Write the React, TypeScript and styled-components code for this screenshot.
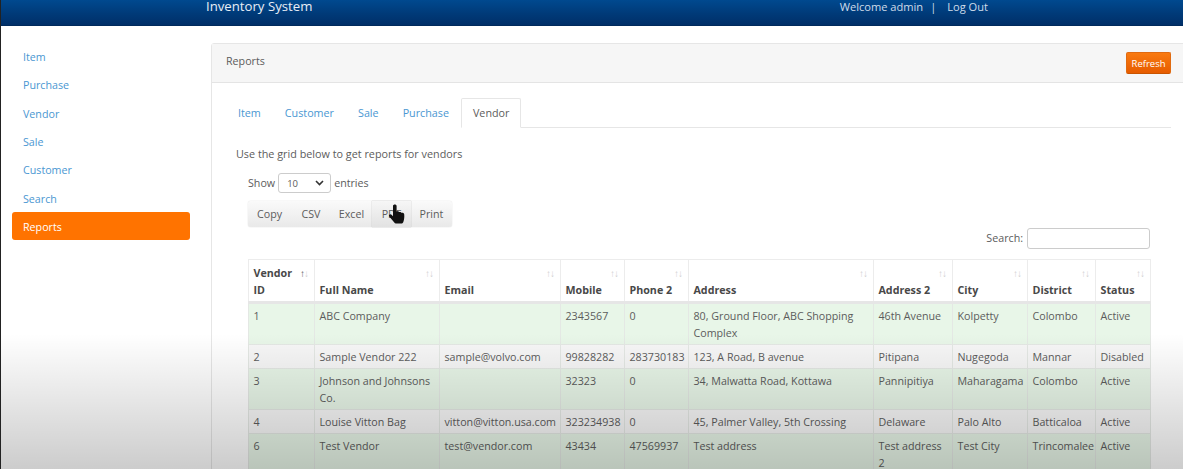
import React from 'react';
import styled, { createGlobalStyle } from 'styled-components';

const GlobalStyle = createGlobalStyle`
  html, body {
    margin: 0;
    height: 469px;
    overflow: hidden;
    background: #fff;
    font-family: 'Open Sans', 'Liberation Sans', sans-serif;
    font-size: 10.7px;
    color: #5c5c5c;
  }
`;

const navItems = ['Item', 'Purchase', 'Vendor', 'Sale', 'Customer', 'Search', 'Reports'];
const tabs = ['Item', 'Customer', 'Sale', 'Purchase', 'Vendor'];
const gridButtons = [
  { label: 'Copy', width: 43 },
  { label: 'CSV', width: 40 },
  { label: 'Excel', width: 41 },
  { label: 'PDF', width: 39 },
  { label: 'Print', width: 41 },
];

const columns = [
  { label: 'Vendor ID', width: 66 },
  { label: 'Full Name', width: 125 },
  { label: 'Email', width: 121 },
  { label: 'Mobile', width: 64 },
  { label: 'Phone 2', width: 64 },
  { label: 'Address', width: 185 },
  { label: 'Address 2', width: 79 },
  { label: 'City', width: 75 },
  { label: 'District', width: 68 },
  { label: 'Status', width: 55 },
];

const rows = [
  ['1', 'ABC Company', '', '2343567', '0', '80, Ground Floor, ABC Shopping Complex', '46th Avenue', 'Kolpetty', 'Colombo', 'Active'],
  ['2', 'Sample Vendor 222', 'sample@volvo.com', '99828282', '283730183', '123, A Road, B avenue', 'Pitipana', 'Nugegoda', 'Mannar', 'Disabled'],
  ['3', 'Johnson and Johnsons Co.', '', '32323', '0', '34, Malwatta Road, Kottawa', 'Pannipitiya', 'Maharagama', 'Colombo', 'Active'],
  ['4', 'Louise Vitton Bag', 'vitton@vitton.usa.com', '323234938', '0', '45, Palmer Valley, 5th Crossing', 'Delaware', 'Palo Alto', 'Batticaloa', 'Active'],
  ['6', 'Test Vendor', 'test@vendor.com', '43434', '47569937', 'Test address', 'Test address 2', 'Test City', 'Trincomalee', 'Active'],
];

const Page = styled.div`
  position: relative;
  height: 469px;
  overflow: hidden;
  border-left: 1px solid #222;
`;

const TopBar = styled.header`
  height: 26px;
  box-sizing: border-box;
  border-bottom: 1px solid #002a5c;
  background: linear-gradient(#00498f, #003a78 55%, #002f68);
  display: flex;
  justify-content: space-between;
  color: #dfe8f2;
  padding: 0 195px 0 205px;
  line-height: 13px;
`;

const Brand = styled.span`
  font-size: 13.2px;
  color: #e8eef6;
`;

const UserLinks = styled.span`
  display: flex;
  font-size: 11.1px;
  color: #cfdcea;
`;

const Separator = styled.span`
  margin: 0 11px 0 7px;
`;

const Main = styled.div`
  display: flex;
  align-items: flex-start;
  padding: 17px 0 0 11px;
`;

const Sidebar = styled.nav`
  width: 178px;
  flex: none;
  margin: -1px 21px 0 0;
  display: flex;
  flex-direction: column;
`;

const NavItem = styled.a<{ $active?: boolean }>`
  height: 28.3px;
  box-sizing: border-box;
  display: flex;
  align-items: center;
  padding: 2px 0 0 11px;
  border-radius: 3px;
  color: ${(p) => (p.$active ? '#fff' : '#4a97d2')};
  background: ${(p) => (p.$active ? '#ff7300' : 'transparent')};
`;

const Panel = styled.section`
  flex: 1;
  min-width: 0;
  height: 500px;
  margin-right: -4px;
  border: 1px solid #e6e6e6;
  border-radius: 3px 0 0 0;
`;

const PanelHeading = styled.div`
  height: 39px;
  box-sizing: border-box;
  background: #f6f6f6;
  border-bottom: 1px solid #e4e4e4;
  display: flex;
  align-items: center;
  justify-content: space-between;
  padding: 0 15px 0 14px;
`;

const PanelTitle = styled.span`
  padding-bottom: 4px;
`;

const RefreshButton = styled.button`
  width: 45px;
  height: 22px;
  padding: 0;
  border: 1px solid #e06a10;
  border-bottom-color: #c95400;
  border-radius: 2px;
  background: linear-gradient(#f97a10, #e65c00);
  color: #fff;
  font: 9.5px 'Open Sans', 'Liberation Sans', sans-serif;
`;

const PanelBody = styled.div`
  padding: 15px 11px 0 14px;
  margin-right: 4px;
`;

const TabBar = styled.div`
  display: flex;
  height: 30px;
  box-sizing: border-box;
  border-bottom: 1px solid #e6e6e6;
`;

const Tab = styled.a<{ $active?: boolean }>`
  height: 30px;
  box-sizing: border-box;
  padding: 0 11px;
  display: flex;
  align-items: center;
  font-size: 10.75px;
  color: ${(p) => (p.$active ? '#5c5c5c' : '#4a97d2')};
  background: #fff;
  border: 1px solid ${(p) => (p.$active ? '#e6e6e6' : 'transparent')};
  border-bottom-color: ${(p) => (p.$active ? '#fff' : 'transparent')};
  border-radius: 2px 2px 0 0;
`;

const Intro = styled.p`
  margin: 18px 0 0 10px;
  font-size: 10.8px;
  line-height: 15px;
`;

const Grid = styled.div`
  position: relative;
  width: 902px;
  margin: 11px 0 0 22px;
`;

const LengthRow = styled.div`
  display: flex;
  align-items: center;
  gap: 3px;
  height: 22px;
`;

const FakeSelect = styled.span`
  width: 53px;
  height: 20px;
  box-sizing: border-box;
  border: 1px solid #ccc;
  border-radius: 3px;
  padding: 0 6px 0 8px;
  display: flex;
  align-items: center;
  justify-content: space-between;
  font-size: 9.5px;
  background: #fff;
`;

const ButtonGroup = styled.div`
  position: relative;
  display: inline-flex;
  margin-top: 7px;
  height: 26px;
  border-radius: 3px;
  box-shadow: 0 0 1px #bbb;
  background: linear-gradient(#fafafa, #e9e9e9);
  vertical-align: top;
`;

const GridButton = styled.span<{ $w: number; $pressed?: boolean }>`
  display: flex;
  align-items: center;
  justify-content: center;
  width: ${(p) => p.$w}px;
  ${(p) =>
    p.$pressed &&
    `
    background: linear-gradient(#f6f6f6, #e2e2e2);
    box-shadow: 0 0 1px #aaa;
  `}
`;

const Cursor = styled.svg`
  position: absolute;
  left: 140px;
  top: 3px;
  width: 18px;
  height: 21px;
`;

const SearchRow = styled.div`
  display: flex;
  justify-content: flex-end;
  align-items: center;
  gap: 4px;
  height: 22px;
`;

const SearchBox = styled.span`
  width: 123px;
  height: 21px;
  box-sizing: border-box;
  border: 1px solid #ccc;
  border-radius: 3px;
  background: #fff;
`;

const Table = styled.table`
  margin-top: 10px;
  width: 902px;
  table-layout: fixed;
  border-collapse: collapse;
  border: 1px solid #e8e8e8;
`;

const Col = styled.col<{ $w: number }>`
  width: ${(p) => p.$w}px;
`;

const HeadCell = styled.th`
  position: relative;
  height: 43px;
  box-sizing: border-box;
  padding: 0 18px 2px 4.5px;
  vertical-align: bottom;
  text-align: left;
  font-weight: 700;
  line-height: 17px;
  color: #484848;
  border: 1px solid #ececec;
  border-bottom: 3px solid #e6e6e6;
  white-space: normal;
`;

const HeadLabel = styled.span`
  white-space: nowrap;
`;

const SortMark = styled.span`
  position: absolute;
  right: 6px;
  top: 5px;
  font-size: 10px;
  letter-spacing: -1px;
  font-weight: 400;
  color: #cfcfcf;
`;

const ActiveArrow = styled.span`
  color: #555;
`;

const BodyRow = styled.tr<{ $odd: boolean }>`
  background: ${(p) => (p.$odd ? '#e8f6e8' : '#f7f7f7')};
`;

const BodyCell = styled.td`
  padding: 4px 4.5px 2px;
  vertical-align: top;
  line-height: 17px;
  border: 1px solid #e4e8e4;
  white-space: normal;
`;

const Shade = styled.div`
  position: absolute;
  left: 0;
  right: 0;
  bottom: 0;
  height: 135px;
  pointer-events: none;
  background: linear-gradient(rgba(0, 0, 0, 0), rgba(0, 0, 0, 0.2));
`;

export default function App() {
  return (
    <>
      <GlobalStyle />
      <Page>
        <TopBar>
          <Brand>Inventory System</Brand>
          <UserLinks>
            <span>Welcome admin</span>
            <Separator>|</Separator>
            <span>Log Out</span>
          </UserLinks>
        </TopBar>
        <Main>
          <Sidebar>
            {navItems.map((item) => (
              <NavItem key={item} $active={item === 'Reports'}>
                {item}
              </NavItem>
            ))}
          </Sidebar>
          <Panel>
            <PanelHeading>
              <PanelTitle>Reports</PanelTitle>
              <RefreshButton>Refresh</RefreshButton>
            </PanelHeading>
            <PanelBody>
              <TabBar>
                {tabs.map((tab) => (
                  <Tab key={tab} $active={tab === 'Vendor'}>
                    {tab}
                  </Tab>
                ))}
              </TabBar>
              <Intro>Use the grid below to get reports for vendors</Intro>
              <Grid>
                <LengthRow>
                  Show
                  <FakeSelect>
                    10
                    <svg width="9" height="6" viewBox="0 0 9 6">
                      <path d="M1 1l3.5 3.5L8 1" fill="none" stroke="#333" strokeWidth="1.6" />
                    </svg>
                  </FakeSelect>
                  entries
                </LengthRow>
                <ButtonGroup>
                  {gridButtons.map((b) => (
                    <GridButton key={b.label} $w={b.width} $pressed={b.label === 'PDF'}>
                      {b.label}
                    </GridButton>
                  ))}
                  <Cursor viewBox="0 0 18 21">
                    <path
                      d="M5 2c0-2 3.600-2 3.600 0v5.500c1.200-.5 2.300-.2 2.600.6 1.100-.4 2.200-.1 2.500.8 1.200-.3 2.300.3 2.500 1.400.3 2.600 0 5-.8 7.500-.3 1-1 1.800-2 1.800H8c-.8 0-1.300-.4-1.700-1L1.200 12.500c-1-1.700 1.200-3 2.400-1.700L5 12.300z"
                      fill="#111"
                    />
                  </Cursor>
                </ButtonGroup>
                <SearchRow>
                  Search:
                  <SearchBox />
                </SearchRow>
                <Table>
                  <colgroup>
                    {columns.map((c) => (
                      <Col key={c.label} $w={c.width} />
                    ))}
                  </colgroup>
                  <thead>
                    <tr>
                      {columns.map((c, i) =>
                        i === 0 ? (
                          <HeadCell key={c.label}>
                            {c.label}
                            <SortMark>
                              <ActiveArrow>↑</ActiveArrow>↓
                            </SortMark>
                          </HeadCell>
                        ) : (
                          <HeadCell key={c.label}>
                            <HeadLabel>{c.label}</HeadLabel>
                            <SortMark>↑↓</SortMark>
                          </HeadCell>
                        ),
                      )}
                    </tr>
                  </thead>
                  <tbody>
                    {rows.map((row, i) => (
                      <BodyRow key={row[0]} $odd={i % 2 === 0}>
                        {row.map((value, j) => (
                          <BodyCell key={j}>{value}</BodyCell>
                        ))}
                      </BodyRow>
                    ))}
                  </tbody>
                </Table>
              </Grid>
            </PanelBody>
          </Panel>
        </Main>
        <Shade />
      </Page>
    </>
  );
}
